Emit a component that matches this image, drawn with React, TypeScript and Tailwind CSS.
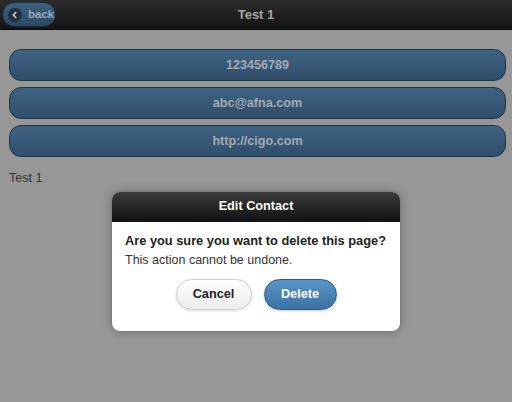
export default function App() {
  const items = ["123456789", "abc@afna.com", "http://cigo.com"];
  return (
    <div
      className="relative w-[512px] h-[402px] overflow-hidden bg-[#979797]"
      style={{ fontFamily: '"Liberation Sans", Arial, sans-serif' }}
    >
      {/* header */}
      <div className="relative h-[30px] flex items-center justify-center bg-gradient-to-b from-[#2c2c2c] to-[#141414] border-b border-[#0a0a0a]">
        <button className="absolute left-[2px] top-[2px] h-[25px] w-[54px] rounded-full border border-[#1d2c3a] bg-gradient-to-b from-[#40607e] to-[#2c4864] flex items-center pl-[5px] gap-[6px]">
          <span className="w-[14px] h-[14px] rounded-full bg-[#20303f] flex items-center justify-center">
            <svg width="8" height="8" viewBox="0 0 8 8">
              <path d="M5.2 1 L2.4 4 L5.2 7" stroke="#b8c4cf" strokeWidth="1.8" fill="none" />
            </svg>
          </span>
          <span className="text-[11.5px] font-bold text-[#9aa8b4]">back</span>
        </button>
        <h1 className="text-[13px] font-bold text-[#a5a5a5]">Test 1</h1>
      </div>

      {/* content */}
      <div className="pl-[9px] pr-[6px] pt-[19px] flex flex-col gap-[6px]">
        {items.map((t) => (
          <div
            key={t}
            className="h-[32px] rounded-[12px] border border-[#1e3446] bg-gradient-to-b from-[#3f6383] to-[#2f4e6a] flex items-center justify-center text-[12.6px] font-bold text-[#a3abb3]"
          >
            {t}
          </div>
        ))}
        <p className="mt-[6px] text-[12.5px] text-[#333]">Test 1</p>
      </div>

      {/* dialog */}
      <div className="absolute left-[112px] top-[192px] w-[288px] h-[139px] rounded-[8px] bg-white shadow-[0_0_10px_rgba(0,0,0,0.35)] overflow-hidden flex flex-col">
        <div className="h-[30px] bg-gradient-to-b from-[#3c3c3c] to-[#111] flex items-center justify-center text-[12.7px] font-bold text-white">
          Edit Contact
        </div>
        <div className="px-[13px] pt-[12px]">
          <p className="whitespace-nowrap text-[12.8px] font-bold text-[#222] leading-[14px]">
            Are you sure you want to delete this page?
          </p>
          <p className="mt-[5px] text-[12.5px] text-[#333] leading-[14px]">
            This action cannot be undone.
          </p>
          <div className="mt-[12px] flex justify-center gap-[12px]">
            <button className="h-[31px] w-[76px] rounded-full border border-[#cfcfcf] bg-gradient-to-b from-white to-[#ececec] text-[12.7px] font-bold text-[#222] shadow-[0_1px_3px_rgba(0,0,0,0.15)]">
              Cancel
            </button>
            <button className="h-[31px] w-[73px] rounded-full border border-[#2a5a85] bg-gradient-to-b from-[#5a94c6] to-[#3a72a4] text-[12.7px] font-bold text-white shadow-[0_1px_3px_rgba(0,0,0,0.2)]">
              Delete
            </button>
          </div>
        </div>
      </div>
    </div>
  );
}
